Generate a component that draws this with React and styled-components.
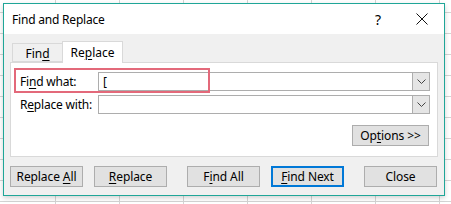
import React from 'react'
import styled, { createGlobalStyle } from 'styled-components'

const Global = createGlobalStyle`
  html, body { margin: 0; padding: 0; }
  body {
    width: 451px;
    height: 204px;
    overflow: hidden;
    font-family: "Noto Sans", "Open Sans", sans-serif;
    font-size: 12px;
    color: #000;
    background-color: #fff;
    background-image:
      linear-gradient(to right, #d4d4d4 1px, transparent 1px),
      linear-gradient(to bottom, #d4d4d4 1px, transparent 1px);
    background-size: 64px 21px;
    background-position: 55px 12px;
  }
`

const Page = styled.div`
  padding: 3px 0 0 3px;
`

const Dialog = styled.div`
  width: 442px;
  height: 193px;
  box-sizing: border-box;
  border: 1px solid #1fa698;
  background: #f0f0f0;
  box-shadow: 0 2px 5px rgba(0, 0, 0, 0.18);
  display: flex;
  flex-direction: column;
`

const TitleBar = styled.div`
  height: 30px;
  background: #fff;
  display: flex;
  align-items: center;
  padding-left: 8px;
`

const Title = styled.div`
  flex: 1;
  font-size: 12px;
  letter-spacing: -0.2px;
`

const TitleButton = styled.div`
  width: 44px;
  height: 30px;
  display: flex;
  align-items: center;
  justify-content: center;
  font-size: 14px;
`

const Body = styled.div`
  flex: 1;
  padding: 7px 6px 7px 6px;
  display: flex;
  flex-direction: column;
`

const TabRow = styled.div`
  display: flex;
  align-items: flex-end;
  padding-left: 2px;
  height: 21px;
  position: relative;
  z-index: 1;
`

const Tab = styled.div`
  box-sizing: border-box;
  width: ${p => p.$w}px;
  height: ${p => (p.$active ? 22 : 19)}px;
  margin-bottom: ${p => (p.$active ? -1 : 0)}px;
  background: ${p => (p.$active ? '#fff' : '#f0f0f0')};
  border: 1px solid #d9d9d9;
  border-bottom: ${p => (p.$active ? 'none' : '1px solid #d9d9d9')};
  border-right: ${p => (p.$active ? '1px solid #d9d9d9' : 'none')};
  display: flex;
  align-items: center;
  justify-content: center;
  padding-top: ${p => (p.$active ? 0 : 1)}px;
`

const Panel = styled.div`
  position: relative;
  box-sizing: border-box;
  height: 95px;
  background: #fff;
  border: 1px solid #d9d9d9;
  padding: 9px 7px 0 9px;
  display: flex;
  flex-direction: column;
  gap: 4px;
`

const FieldRow = styled.div`
  display: flex;
  align-items: center;
  height: 19px;
`

const Label = styled.div`
  width: 78px;
  letter-spacing: -0.2px;
`

const Combo = styled.div`
  flex: 1;
  box-sizing: border-box;
  height: 19px;
  border: 1px solid #adadad;
  display: flex;
  align-items: center;
  background: #fff;
`

const ComboText = styled.div`
  flex: 1;
  padding-left: 4px;
  font-size: 12px;
`

const ComboArrow = styled.div`
  width: 16px;
  height: 17px;
  background: #e5e5e5;
  border-left: 1px solid #adadad;
  display: flex;
  align-items: center;
  justify-content: center;
`

const Highlight = styled.div`
  position: absolute;
  left: 3px;
  top: 5px;
  width: 196px;
  height: 25px;
  box-sizing: border-box;
  border: 2px solid #e3697a;
  pointer-events: none;
`

const OptionsRow = styled.div`
  display: flex;
  justify-content: flex-end;
  margin-top: 7px;
  padding-right: 1px;
`

const Button = styled.div`
  box-sizing: border-box;
  width: ${p => p.$w || 73}px;
  height: 21px;
  background: #e1e1e1;
  border: ${p => (p.$default ? '2px solid #0078d7' : '1px solid #adadad')};
  display: flex;
  align-items: center;
  justify-content: center;
  font-size: 12px;
  letter-spacing: -0.1px;
  white-space: pre;
`

const ButtonRow = styled.div`
  display: flex;
  gap: 20px;
  margin-top: 9px;
`

const ButtonGroup = styled.div`
  display: flex;
  gap: 11px;
`

const Key = styled.span`
  text-decoration: underline;
  text-underline-offset: 2px;
`

const Chevron = () => (
  <svg width="9" height="5" viewBox="0 0 9 5">
    <path d="M0.5 0.5 L4.5 4.5 L8.5 0.5" fill="none" stroke="#444" strokeWidth="1" />
  </svg>
)

const CloseIcon = () => (
  <svg width="12" height="12" viewBox="0 0 12 12">
    <path d="M0.5 0.5 L11.5 11.5 M11.5 0.5 L0.5 11.5" stroke="#111" strokeWidth="1" />
  </svg>
)

export default function App() {
  return (
    <>
      <Global />
      <Page>
        <Dialog>
          <TitleBar>
            <Title>Find and Replace</Title>
            <TitleButton>?</TitleButton>
            <TitleButton>
              <CloseIcon />
            </TitleButton>
          </TitleBar>
          <Body>
            <TabRow>
              <Tab $w={50}>
                <span>Fin<Key>d</Key></span>
              </Tab>
              <Tab $w={61} $active>
                <span>Re<Key>p</Key>lace</span>
              </Tab>
            </TabRow>
            <Panel>
              <FieldRow>
                <Label>
                  Fi<Key>n</Key>d what:
                </Label>
                <Combo>
                  <ComboText>[</ComboText>
                  <ComboArrow>
                    <Chevron />
                  </ComboArrow>
                </Combo>
              </FieldRow>
              <FieldRow>
                <Label>
                  R<Key>e</Key>place with:
                </Label>
                <Combo>
                  <ComboText />
                  <ComboArrow>
                    <Chevron />
                  </ComboArrow>
                </Combo>
              </FieldRow>
              <OptionsRow>
                <Button $w={77}>
                  <span>Op<Key>t</Key>ions &gt;&gt;</span>
                </Button>
              </OptionsRow>
              <Highlight />
            </Panel>
            <ButtonRow>
              <ButtonGroup>
                <Button>
                  <span>Replace <Key>A</Key>ll</span>
                </Button>
                <Button>
                  <span><Key>R</Key>eplace</span>
                </Button>
              </ButtonGroup>
              <ButtonGroup>
                <Button>
                  <span>F<Key>i</Key>nd All</span>
                </Button>
                <Button $default>
                  <span><Key>F</Key>ind Next</span>
                </Button>
              </ButtonGroup>
              <Button>
                <span>Close</span>
              </Button>
            </ButtonRow>
          </Body>
        </Dialog>
      </Page>
    </>
  )
}
